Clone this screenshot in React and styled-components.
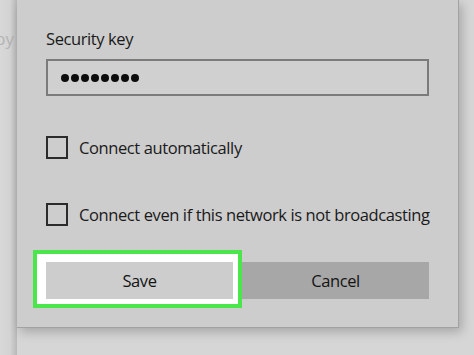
import React from "react";
import styled, { createGlobalStyle } from "styled-components";

const GlobalStyle = createGlobalStyle`
    html, body {
        margin: 0;
        padding: 0;
        background: #d5d5d5;
    }
    body {
        width: 474px;
        height: 355px;
        overflow: hidden;
        font-family: "Open Sans", "Noto Sans", sans-serif;
        color: #1a1a1a;
    }
`;

const App = () => {
    return (
        <>
            <GlobalStyle />
            <Screen>
                <BackWindow>
                    <Ghost>by</Ghost>
                </BackWindow>
                <Panel>
                    <Label>Security key</Label>
                    <Field>
                        {Array.from({ length: 8 }).map((_, i) => (
                            <Dot key={i} />
                        ))}
                    </Field>
                    <Option first>
                        <Box />
                        <span>Connect automatically</span>
                    </Option>
                    <Option>
                        <Box />
                        <span>Connect even if this network is not broadcasting</span>
                    </Option>
                    <Buttons>
                        <Highlight>
                            <Button>Save</Button>
                        </Highlight>
                        <Button dark>Cancel</Button>
                    </Buttons>
                </Panel>
            </Screen>
        </>
    );
};

export default App;

const Screen = styled.div`
    display: flex;
    align-items: flex-start;
    width: 474px;
    height: 355px;
    background: #d6d6d6;
`;

const BackWindow = styled.div`
    width: 17px;
    height: 355px;
    overflow: hidden;
    background: linear-gradient(to right, #d8d8d8 0px, #d3d3d3 10px, #b8b8b8 17px);
    flex-shrink: 0;
`;

const Ghost = styled.div`
    margin-top: 27px;
    margin-left: -5px;
    font-size: 17px;
    line-height: 24px;
    color: #b3b3b3;
`;

const Panel = styled.div`
    box-sizing: border-box;
    width: 442px;
    height: 328px;
    padding: 27px 29px 0 29px;
    background: #cdcdcd;
    border-right: 1px solid #a2a2a2;
    border-bottom: 1px solid #a2a2a2;
    box-shadow: 3px 4px 10px rgba(0, 0, 0, 0.22);
    display: flex;
    flex-direction: column;
    font-size: 16.5px;
    letter-spacing: -0.4px;
`;

const Label = styled.div`
    line-height: 24px;
`;

const Field = styled.div`
    box-sizing: border-box;
    margin-top: 8px;
    height: 37px;
    border: 2px solid #7b7b7b;
    background: #d0d0d0;
    display: flex;
    align-items: center;
    gap: 2px;
    padding-left: 13px;
`;

const Dot = styled.span`
    width: 8px;
    height: 8px;
    border-radius: 50%;
    background: #0d0d0d;
`;

const Option = styled.div`
    display: flex;
    align-items: center;
    gap: 11px;
    margin-top: ${(p) => (p.first ? "40px" : "44px")};
    height: 23px;
    line-height: 23px;
    white-space: nowrap;
`;

const Box = styled.span`
    box-sizing: border-box;
    width: 22px;
    height: 23px;
    border: 2px solid #2b2b2b;
    flex-shrink: 0;
`;

const Buttons = styled.div`
    display: flex;
    margin-top: 36px;
`;

const Highlight = styled.div`
    display: flex;
    margin: -12px 0 -9px -13px;
    padding: 8px 5px 5px 9px;
    border: 4px solid #4be64b;
    background: #ffffff;
`;

const Button = styled.div`
    display: flex;
    align-items: center;
    justify-content: center;
    width: ${(p) => (p.dark ? "188px" : "187px")};
    height: 37px;
    background: ${(p) => (p.dark ? "#a7a7a7" : "#cdcdcd")};
    color: #141414;
`;
